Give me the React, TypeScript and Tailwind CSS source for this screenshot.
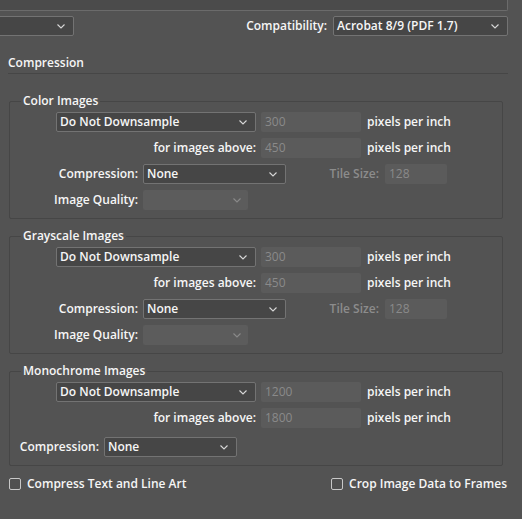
import React from "react";

const Chevron = ({ dim }: { dim?: boolean }) => (
  <svg width="8" height="5" viewBox="0 0 8 5" className="shrink-0">
    <polyline
      points="0.5,0.5 4,4 7.5,0.5"
      fill="none"
      stroke={dim ? "#8a8a8a" : "#d8d8d8"}
      strokeWidth="1.1"
    />
  </svg>
);

function Select({ value, className = "", disabled }: { value?: string; className?: string; disabled?: boolean }) {
  if (disabled) {
    return (
      <div className={`h-[20px] flex items-center justify-end pr-[7px] rounded-[2px] bg-[#5c5c5c] ${className}`}>
        <Chevron dim />
      </div>
    );
  }
  return (
    <div
      className={`h-[20px] flex items-center justify-between pl-[3px] pr-[8px] rounded-[2px] bg-[#464646] border border-[#737373] text-[#f6f6f6] ${className}`}
    >
      <span>{value}</span>
      <Chevron />
    </div>
  );
}

function Field({ value, className = "" }: { value: string; className?: string }) {
  return (
    <div className={`h-[20px] flex items-center pl-[4px] rounded-[2px] bg-[#5b5b5b] text-[#8a8a8a] font-normal ${className}`}>
      {value}
    </div>
  );
}

const Label = ({ children, className = "" }: { children: React.ReactNode; className?: string }) => (
  <div className={`text-right text-[#f6f6f6] shrink-0 ${className}`}>{children}</div>
);

function Group({
  title,
  values,
  mono,
}: {
  title: string;
  values: [string, string];
  mono?: boolean;
}) {
  return (
    <fieldset className="w-[494px] ml-[9px] border border-[#464646] rounded-[2px] pb-[8px]">
      <legend className="ml-[11px] px-[2px] leading-[16px] text-[#f6f6f6]">{title}</legend>
      <div className="flex flex-col gap-[6px] pt-[3px]">
        <div className="flex items-center">
          <Select value="Do Not Downsample" className="ml-[46px] w-[200px]" />
          <Field value={values[0]} className="ml-[5px] w-[100px]" />
          <span className="ml-[6px] text-[#f6f6f6]">pixels per inch</span>
        </div>
        <div className="flex items-center">
          <Label className="w-[246px]">for images above:</Label>
          <Field value={values[1]} className="ml-[5px] w-[100px]" />
          <span className="ml-[6px] text-[#f6f6f6]">pixels per inch</span>
        </div>
        {mono ? (
          <div className="flex items-center mt-[3px]">
            <Label className="w-[89px]">Compression:</Label>
            <Select value="None" className="ml-[5px] w-[133px]" />
          </div>
        ) : (
          <>
            <div className="flex items-center">
              <Label className="w-[128px]">Compression:</Label>
              <Select value="None" className="ml-[5px] w-[143px]" />
              <Label className="w-[93px] !text-[#8c8c8c]">Tile Size:</Label>
              <Field value="128" className="ml-[6px] w-[62px]" />
            </div>
            <div className="flex items-center">
              <Label className="w-[128px]">Image Quality:</Label>
              <Select disabled className="ml-[5px] w-[105px]" />
            </div>
          </>
        )}
      </div>
    </fieldset>
  );
}

const Check = ({ label }: { label: string }) => (
  <div className="flex items-center gap-[6px] text-[#f6f6f6]">
    <div className="w-[12px] h-[12px] rounded-[2px] border border-[#c8c8c8] bg-[#505050]" />
    <span>{label}</span>
  </div>
);

export default function App() {
  return (
    <div
      className="w-[522px] h-[519px] overflow-hidden bg-[#535353] text-[12px] leading-[16px] font-semibold"
      style={{ fontFamily: '"Open Sans", "Liberation Sans", sans-serif' }}
    >
      <div className="w-[508px] h-[11px] bg-[#4b4b4b] border-b border-r border-[#6b6b6b] rounded-br-[2px]" />

      <div className="mt-[5px] w-[508px] flex items-center">
        <Select className="-ml-[2px] w-[76px]" />
        <div className="flex-1" />
        <Label className="mr-[6px]">Compatibility:</Label>
        <Select value="Acrobat 8/9 (PDF 1.7)" className="w-[175px]" />
      </div>

      <div className="mt-[19px] ml-[8px] w-[500px] pb-[2px] border-b border-[#464646] text-[#f6f6f6]">Compression</div>

      <div className="mt-[19px] flex flex-col gap-[9px]">
        <Group title="Color Images" values={["300", "450"]} />
        <Group title="Grayscale Images" values={["300", "450"]} />
        <Group title="Monochrome Images" values={["1200", "1800"]} mono />
      </div>

      <div className="mt-[10px] ml-[9px] w-[498px] flex justify-between">
        <Check label="Compress Text and Line Art" />
        <Check label="Crop Image Data to Frames" />
      </div>
    </div>
  );
}
